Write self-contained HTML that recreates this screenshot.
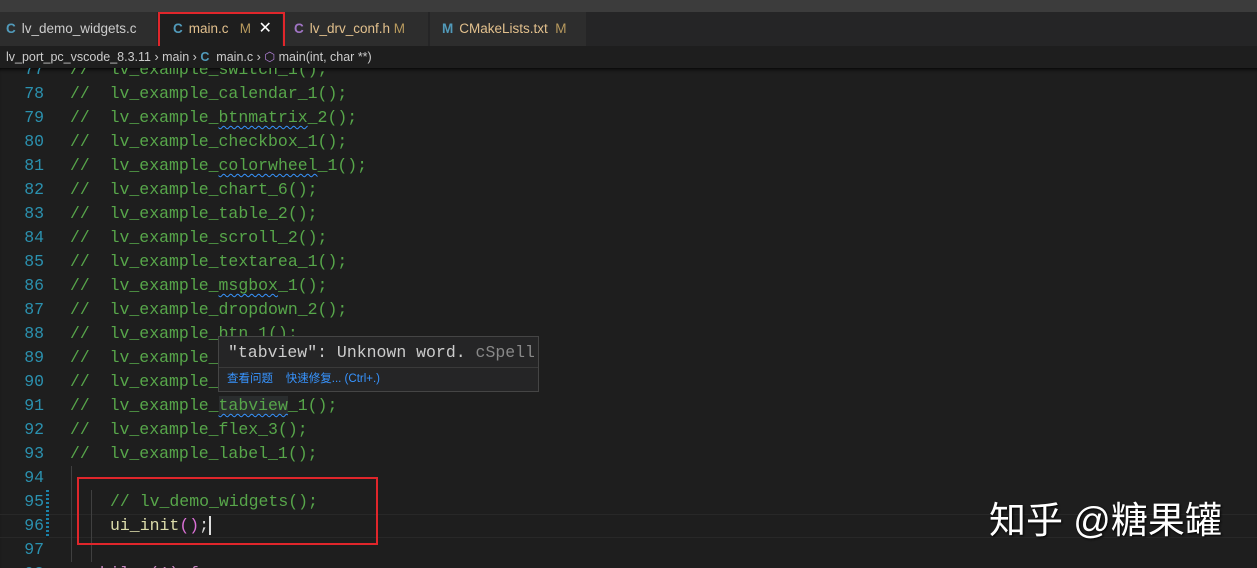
<!DOCTYPE html>
<html><head><meta charset="utf-8"><style>
*{margin:0;padding:0;box-sizing:border-box}
body{width:1257px;height:568px;background:#1e1e1e;overflow:hidden;position:relative;font-family:"Liberation Sans","Noto Sans CJK SC",sans-serif}
#title{position:absolute;left:0;top:0;width:1257px;height:12px;background:#3c3c3c}
#tabs{position:absolute;left:0;top:12px;width:1257px;height:34px;background:#252526}
.tab{position:absolute;top:0;height:34px;background:#2d2d2d;color:#ccc;font-size:13.5px;line-height:34px;padding-left:6px;white-space:nowrap}
.tab b{font-weight:bold;margin-right:6px}
#bc{position:absolute;left:0;top:46px;width:1257px;height:22px;background:#1e1e1e;color:#ccc;font-size:12.5px;line-height:22px;padding-left:6px;white-space:nowrap}
#ed{position:absolute;left:0;top:68px;width:1257px;height:500px;overflow:hidden;box-shadow:inset 0 4px 4px -3px #000}
.ln{position:absolute;left:0;width:44px;text-align:right;color:#2b91af;font:16.5px/24px "Liberation Mono",monospace}
.cd{position:absolute;left:70px;font:16.5px/24px "Liberation Mono",monospace;color:#57a64a;white-space:pre}
.sq{text-decoration:underline wavy #3794ff;text-decoration-thickness:1px;text-underline-offset:3px}
</style></head><body>
<div id="title"></div>
<div id="tabs">
 <div class="tab" style="left:0;width:157px;"><b style="color:#519aba">C</b>lv_demo_widgets.c</div>
 <div class="tab" style="left:159px;width:123px;background:#1e1e1e;color:#e2c08d;padding-left:14px"><b style="color:#519aba">C</b>main.c&nbsp;&nbsp; <span style="color:#b89a5e">M</span>&nbsp; <span style="color:#fff;font-size:16px">✕</span></div>
 <div class="tab" style="left:284px;width:144px;color:#e2c08d;padding-left:10px"><b style="color:#a074c4">C</b>lv_drv_conf.h <span style="color:#b89a5e">M</span></div>
 <div class="tab" style="left:430px;width:156px;color:#e2c08d;padding-left:12px"><b style="color:#519aba">M</b>CMakeLists.txt&nbsp; <span style="color:#b89a5e">M</span></div>
</div>
<div style="position:absolute;left:158px;top:12px;width:127px;height:38px;border:2px solid #e0262b"></div>
<div id="bc">lv_port_pc_vscode_8.3.11 › main › <b style="color:#519aba">C</b>&nbsp; main.c › <span style="color:#b180d7">⬡</span> main(int, char **)</div>
<div id="ed">
<div style="position:absolute;left:0;top:-10px;width:1257px">
<div style="position:absolute;left:0;top:456px;width:1257px;height:24px;border-top:1px solid #282828;border-bottom:1px solid #282828"></div>
<div style="position:absolute;left:71px;top:408px;width:1px;height:96px;background:#404040"></div>
<div style="position:absolute;left:91px;top:432px;width:1px;height:72px;background:#404040"></div>
<div style="position:absolute;left:46px;top:432px;width:3px;height:48px;background:repeating-linear-gradient(#1b81a8 0 2px,#1e1e1e 2px 4px)"></div>
<div class="ln" style="top:0">77</div><div class="cd" style="top:0">//  lv_example_switch_1();</div>
<div class="ln" style="top:24px">78</div><div class="cd" style="top:24px">//  lv_example_calendar_1();</div>
<div class="ln" style="top:48px">79</div><div class="cd" style="top:48px">//  lv_example_<span class="sq">btnmatrix</span>_2();</div>
<div class="ln" style="top:72px">80</div><div class="cd" style="top:72px">//  lv_example_checkbox_1();</div>
<div class="ln" style="top:96px">81</div><div class="cd" style="top:96px">//  lv_example_<span class="sq">colorwheel</span>_1();</div>
<div class="ln" style="top:120px">82</div><div class="cd" style="top:120px">//  lv_example_chart_6();</div>
<div class="ln" style="top:144px">83</div><div class="cd" style="top:144px">//  lv_example_table_2();</div>
<div class="ln" style="top:168px">84</div><div class="cd" style="top:168px">//  lv_example_scroll_2();</div>
<div class="ln" style="top:192px">85</div><div class="cd" style="top:192px">//  lv_example_textarea_1();</div>
<div class="ln" style="top:216px">86</div><div class="cd" style="top:216px">//  lv_example_<span class="sq">msgbox</span>_1();</div>
<div class="ln" style="top:240px">87</div><div class="cd" style="top:240px">//  lv_example_dropdown_2();</div>
<div class="ln" style="top:264px">88</div><div class="cd" style="top:264px">//  lv_example_btn_1();</div>
<div class="ln" style="top:288px">89</div><div class="cd" style="top:288px">//  lv_example_</div>
<div class="ln" style="top:312px">90</div><div class="cd" style="top:312px">//  lv_example_</div>
<div class="ln" style="top:336px">91</div><div class="cd" style="top:336px">//  lv_example_<span class="sq" style="background:#2a2d2e">tabview</span>_1();</div>
<div class="ln" style="top:360px">92</div><div class="cd" style="top:360px">//  lv_example_flex_3();</div>
<div class="ln" style="top:384px">93</div><div class="cd" style="top:384px">//  lv_example_label_1();</div>
<div class="ln" style="top:408px">94</div>
<div class="ln" style="top:432px">95</div><div class="cd" style="top:432px;left:110px">// lv_demo_widgets();</div>
<div class="ln" style="top:456px">96</div><div class="cd" style="top:456px;left:110px;color:#dcdcaa">ui_init<span style="color:#da70d6">()</span><span style="color:#d4d4d4">;</span><span style="border-left:2px solid #ddd"></span></div>
<div class="ln" style="top:480px">97</div>
<div class="ln" style="top:504px">98</div><div class="cd" style="top:504px;left:90px;color:#c586c0">while (1) {</div>
</div>
<div style="position:absolute;left:77px;top:409px;width:301px;height:68px;border:2px solid #e0262b"></div>
<div style="position:absolute;left:218px;top:268px;width:321px;height:56px;background:#252526;border:1px solid #454545">
 <div style="height:31px;font:16.5px/31px 'Liberation Mono',monospace;color:#ccc;padding-left:9px;border-bottom:1px solid #3a3a3a">"tabview": Unknown word. <span style="color:#888">cSpell</span></div>
 <div style="font-size:11.5px;line-height:22px;color:#3794ff;padding-left:8px">查看问题&nbsp;&nbsp;&nbsp;&nbsp;快速修复... (Ctrl+.)</div>
</div>
<div style="position:absolute;left:989px;top:422px;font-size:37px;color:#fff;font-family:'Liberation Sans','Noto Sans CJK SC',sans-serif;white-space:nowrap;text-shadow:1px 1px 2px #000">知乎 @糖果罐</div>
</div>
</body></html>
